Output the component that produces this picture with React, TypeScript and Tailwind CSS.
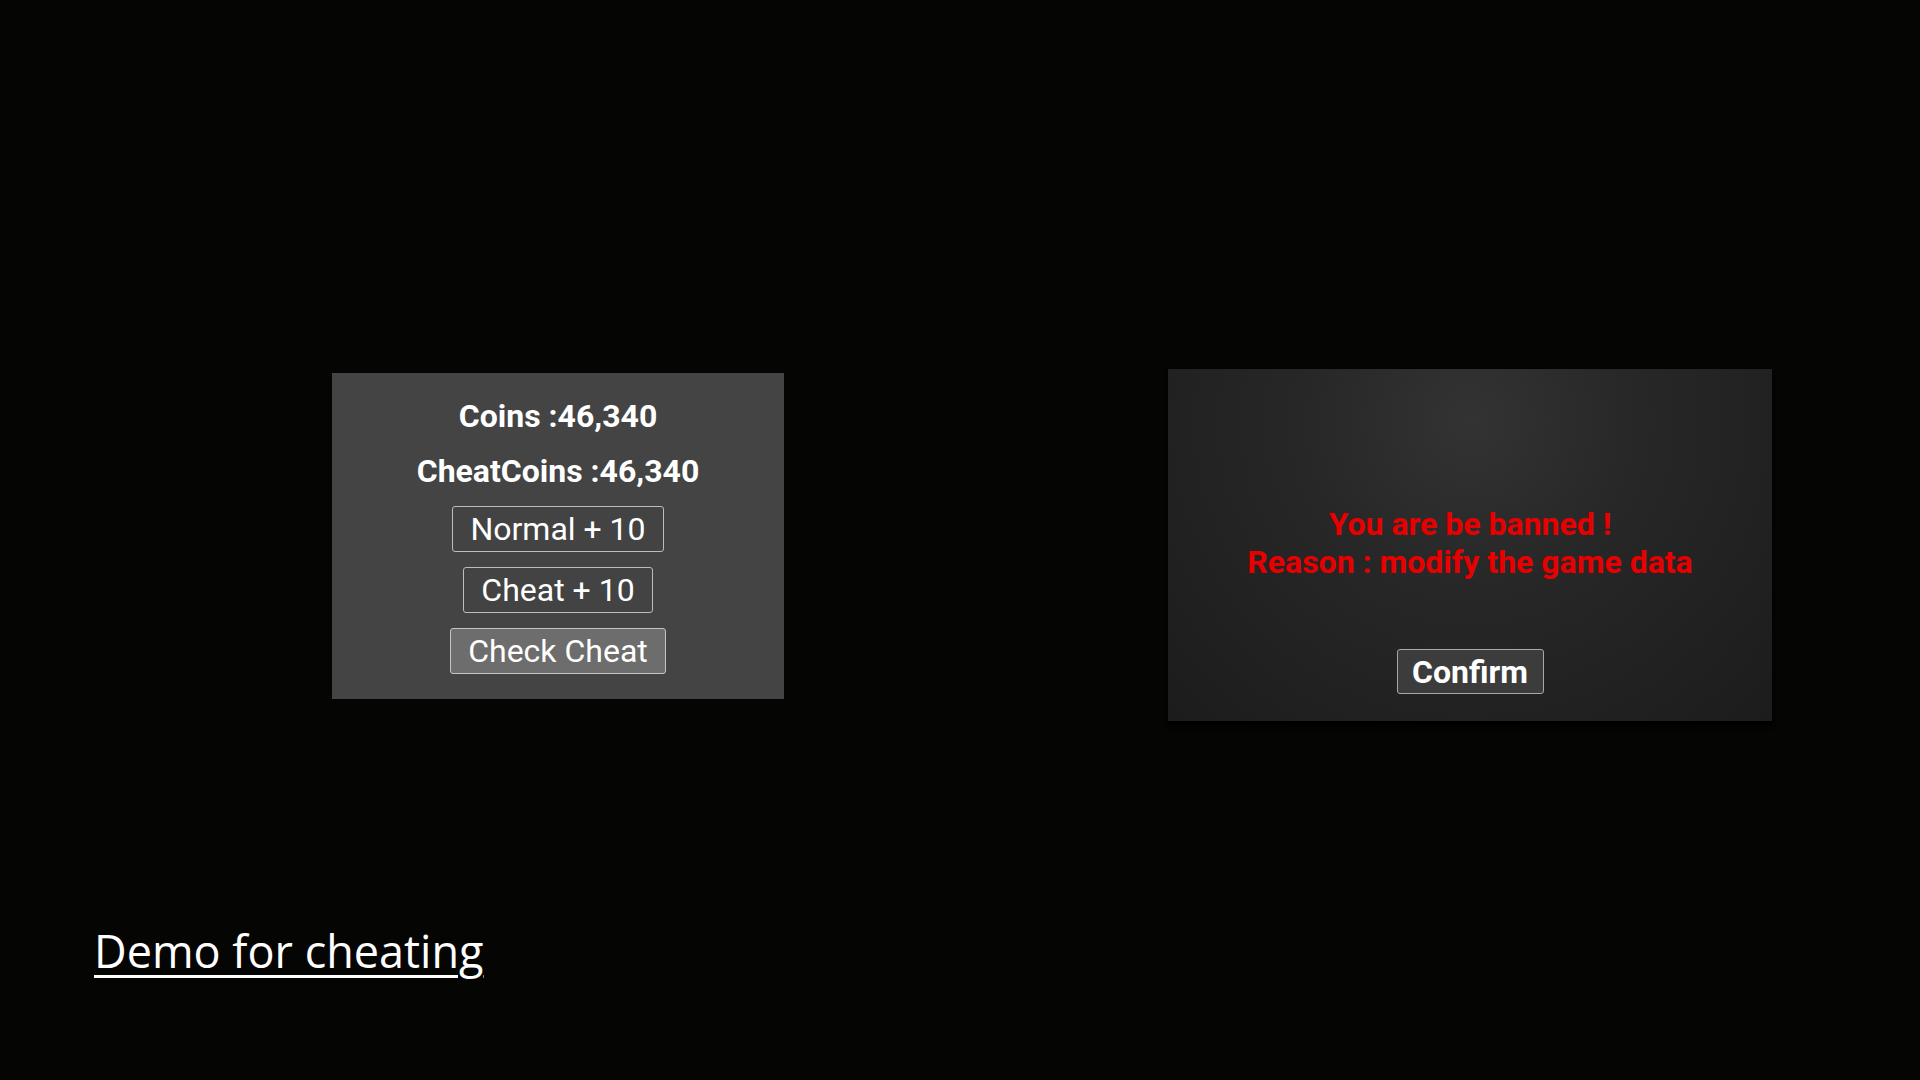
export default function App() {
  return (
    <div className="flex h-[1080px] w-[1920px] flex-col overflow-hidden bg-[#050503] font-['Roboto',sans-serif]">
      <div className="flex items-start pl-[332px] pt-[369px]">
        <div className="mt-[4px] flex h-[326px] w-[452px] flex-col items-center bg-[#444444] pt-[23px] text-white">
          <div className="h-[40px] text-[32px] font-bold leading-[40px]">Coins :46,340</div>
          <div className="mt-[15px] h-[40px] text-[32px] font-bold leading-[40px]">CheatCoins :46,340</div>
          <button className="mt-[15px] h-[46px] rounded-[3px] border border-[#bdbdbd] bg-[#434343] px-[17px] text-[32px] leading-[42px]">
            Normal + 10
          </button>
          <button className="mt-[15px] h-[46px] rounded-[3px] border border-[#bdbdbd] bg-[#434343] px-[17px] text-[32px] leading-[42px]">
            Cheat + 10
          </button>
          <button className="mt-[15px] h-[46px] rounded-[3px] border border-[#c4c4c4] bg-[#6d6d6d] px-[17px] text-[32px] leading-[42px]">
            Check Cheat
          </button>
        </div>
        <div className="ml-[384px] flex h-[352px] w-[604px] flex-col items-center bg-[radial-gradient(ellipse_at_50%_15%,#333333_0%,#272727_40%,#1c1c1c_100%)] pt-[136px] shadow-[0_5px_4px_rgba(0,0,0,0.9)]">
          <div className="text-center text-[32px] font-bold leading-[38px] text-[#e80000]">
            <div>You are be banned !</div>
            <div>Reason : modify the game data</div>
          </div>
          <button className="mt-[68px] h-[45px] w-[147px] rounded-[3px] border border-[#a8a8a8] bg-[#3c3c3c] text-[32px] font-bold leading-[42px] text-white">
            Confirm
          </button>
        </div>
      </div>
      <div className="mt-[202px] pl-[94px]">
        <span className="font-['Open_Sans',sans-serif] text-[45px] leading-[56px] text-white underline decoration-[3px] underline-offset-[7px]">
          Demo for cheating
        </span>
      </div>
    </div>
  )
}
